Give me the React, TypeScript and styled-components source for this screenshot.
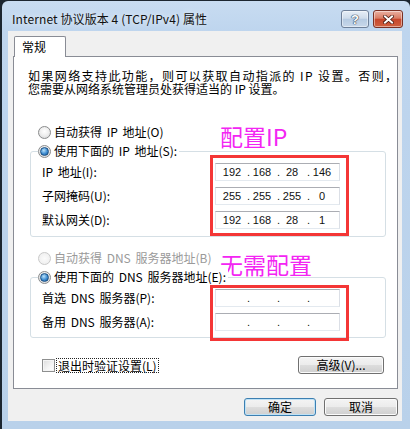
import React from "react";
import styled, { createGlobalStyle } from "styled-components";

const GlobalStyle = createGlobalStyle`
  html, body {
    margin: 0;
    padding: 0;
    background: #1c2630;
  }
  body {
    font-family: "Noto Sans CJK SC", "Liberation Sans", sans-serif;
    font-size: 12px;
    color: #000;
  }
  * {
    box-sizing: border-box;
  }
`;

const Window = styled.div`
  width: 408px;
  height: 428px;
  margin: 1px 0 0 2px;
  border-top-left-radius: 6px;
  border-top-right-radius: 6px;
  background: linear-gradient(180deg, #c8dcf1 0%, #bed5ee 30px, #b9d1ea 100%);
  display: flex;
  flex-direction: column;
  padding: 0 8px 8px 6px;
`;

const TitleBar = styled.div`
  height: 30px;
  flex: none;
  display: flex;
  align-items: center;
  padding-top: 6px;
`;

const Caption = styled.div`
  flex: 1;
  margin-left: 4px;
  font-size: 12px;
  line-height: 14px;
  color: #111;
  letter-spacing: 0.1px;
  text-shadow: 0 0 6px rgba(255, 255, 255, 0.9);
`;

const CaptionButton = styled.div<{ $close?: boolean }>`
  width: ${(p) => (p.$close ? 30 : 28)}px;
  height: 18px;
  margin-left: ${(p) => (p.$close ? 4 : 0)}px;
  margin-right: ${(p) => (p.$close ? -1 : 0)}px;
  border-radius: 3px;
  border: 1px solid ${(p) => (p.$close ? "#7a3024" : "#6e8099")};
  box-shadow: inset 0 0 0 1px rgba(255, 255, 255, 0.45);
  background: ${(p) =>
    p.$close
      ? "linear-gradient(180deg, #eab0a2 0%, #d97c64 45%, #c6462c 52%, #d0603f 100%)"
      : "linear-gradient(180deg, #e6eef7 0%, #cfdceb 45%, #b6cbe2 52%, #c8d8ea 100%)"};
  display: flex;
  align-items: center;
  justify-content: center;
`;

const HelpGlyph = styled.span`
  font-family: "Liberation Sans", sans-serif;
  font-weight: bold;
  font-size: 13px;
  line-height: 13px;
  color: #fff;
  text-shadow: 0 0 1px #2c3c52, 0 0 1px #2c3c52, 0 0 1px #2c3c52;
`;

const Client = styled.div`
  flex: 1;
  background: #f0f0f0;
  display: flex;
  flex-direction: column;
  padding: 5px 4px 5px 5px;
`;

const TabStrip = styled.div`
  height: 20px;
  flex: none;
  display: flex;
  padding-left: 1px;
`;

const Tab = styled.div`
  width: 52px;
  height: 21px;
  margin-bottom: -1px;
  position: relative;
  z-index: 1;
  background: #fff;
  border: 1px solid #898c95;
  border-bottom: none;
  border-radius: 2px 2px 0 0;
  padding-left: 7px;
  line-height: 19px;
`;

const TabPanel = styled.div`
  height: 333px;
  flex: none;
  background: #fff;
  border: 1px solid #898c95;
  display: flex;
  flex-direction: column;
  padding: 12px 11px 0 16px;
`;

const Intro = styled.div`
  margin-left: -2px;
`;

const IntroLine = styled.div<{ $spread?: number }>`
  height: 13px;
  line-height: 13px;
  white-space: nowrap;
  letter-spacing: ${(p) => p.$spread ?? 0}px;
`;

const RadioRow = styled.div<{ $gap: number }>`
  height: 16px;
  margin-top: ${(p) => p.$gap}px;
  display: flex;
  align-items: center;
`;

const OptionSlot = styled.div`
  width: 190px;
  padding-left: 8px;
  display: flex;
  align-items: center;
`;

const Option = styled.label<{ $disabled?: boolean }>`
  display: flex;
  align-items: center;
  white-space: nowrap;
  color: ${(p) => (p.$disabled ? "#9a9a9a" : "#000")};
  line-height: 16px;
  word-spacing: 2px;
`;

const RadioMark = styled.span<{ $checked?: boolean; $disabled?: boolean }>`
  width: 13px;
  height: 13px;
  flex: none;
  border-radius: 50%;
  margin-right: 3px;
  border: 1px solid ${(p) => (p.$disabled ? "#c9c9c9" : "#8a8b8c")};
  background: ${(p) =>
    p.$disabled
      ? "radial-gradient(circle, #fbfbfb 0%, #ececec 100%)"
      : "radial-gradient(circle at 50% 40%, #ffffff 0%, #eeeeee 50%, #cfd1d3 100%)"};
  display: flex;
  align-items: center;
  justify-content: center;

  &::after {
    content: "";
    display: ${(p) => (p.$checked ? "block" : "none")};
    width: 7px;
    height: 7px;
    border-radius: 50%;
    border: 1px solid #1b4f82;
    background: radial-gradient(circle at 40% 35%, #b9e2fb 0%, #3d8bd0 55%, #1c5a95 100%);
  }
`;

const Annotation = styled.div<{ $drop: number }>`
  align-self: flex-start;
  margin-top: ${(p) => p.$drop}px;
  font-size: 23px;
  line-height: 24px;
  color: #f325f3;
  white-space: nowrap;
`;

const Group = styled.div`
  margin-top: 11px;
  border: 1px solid #d5dfe5;
  border-radius: 3px;
  display: flex;
  flex-direction: column;
`;

const GroupHeader = styled.div`
  align-self: flex-start;
  height: 16px;
  margin: -9px 0 0 7px;
  padding-right: 2px;
  background: #fff;
  display: flex;
  align-items: center;
`;

const GroupBody = styled.div<{ $top: number; $bottom: number }>`
  display: flex;
  margin-top: ${(p) => p.$top}px;
  margin-bottom: ${(p) => p.$bottom}px;
  padding-left: 11px;
`;

const LabelColumn = styled.div<{ $pad: number }>`
  width: 168px;
  padding-top: ${(p) => p.$pad}px;
  display: flex;
  flex-direction: column;
  gap: 6px;
`;

const FieldLabel = styled.div`
  height: 18px;
  line-height: 18px;
  white-space: nowrap;
  word-spacing: 2px;
`;

const Highlight = styled.div<{ $pad: string }>`
  border: 3px solid #f43636;
  padding: ${(p) => p.$pad};
  display: flex;
  flex-direction: column;
  gap: 6px;
`;

const AddressBox = styled.div`
  width: 125px;
  height: 18px;
  background: #fff;
  border: 1px solid;
  border-color: #abadb3 #dbdfe6 #e3e9ef #e2e3ea;
  display: flex;
  align-items: center;
  padding-left: 4px;
  font-family: "Liberation Sans", sans-serif;
  font-size: 11px;
  line-height: 14px;
  color: #111;
`;

const Octet = styled.span`
  width: 24px;
  text-align: center;
`;

const Dot = styled.span`
  width: 6px;
  text-align: right;
`;

const FooterRow = styled.div`
  height: 18px;
  margin-top: 18px;
  display: flex;
  align-items: center;
  justify-content: space-between;
  padding: 0 2px 0 12px;
`;

const CheckOption = styled.label`
  display: flex;
  align-items: center;
`;

const CheckMark = styled.span`
  width: 13px;
  height: 13px;
  border: 1px solid #8e8f8f;
  background: linear-gradient(135deg, #dcdcdc 0%, #f5f5f5 60%, #ffffff 100%);
  box-shadow: inset 0 0 0 1px #f4f4f4;
`;

const FocusText = styled.span`
  margin-left: 2px;
  padding: 0 1px;
  line-height: 13px;
  outline: 1px dotted #222;
  white-space: nowrap;
`;

const PushButton = styled.button<{ $width: number; $default?: boolean }>`
  width: ${(p) => p.$width}px;
  height: 18px;
  padding: 0;
  font-family: "Noto Sans CJK SC", "Liberation Sans", sans-serif;
  font-size: 12px;
  line-height: 14px;
  color: #000;
  border-radius: 3px;
  border: 1px solid ${(p) => (p.$default ? "#3c7fb1" : "#707070")};
  box-shadow: inset 0 0 0 1px ${(p) => (p.$default ? "#bfe2f6" : "#fbfbfb")};
  background: linear-gradient(180deg, #f4f4f4 0%, #ececec 48%, #dddddd 52%, #cfcfcf 100%);
`;

const DialogButtons = styled.div`
  margin-top: 9px;
  display: flex;
  justify-content: flex-end;
  gap: 8px;
`;

function CloseGlyph() {
  const d = "M2 1.5 L9 7.5 M9 1.5 L2 7.5";
  return (
    <svg width="11" height="9" viewBox="0 0 11 9">
      <path d={d} stroke="#4a1a12" strokeWidth="3.6" strokeLinecap="square" />
      <path d={d} stroke="#fff" strokeWidth="2" strokeLinecap="square" />
    </svg>
  );
}

function Address({ value }: { value: string[] }) {
  return (
    <AddressBox>
      {value.map((part, i) => (
        <React.Fragment key={i}>
          {i > 0 && <Dot>.</Dot>}
          <Octet>{part}</Octet>
        </React.Fragment>
      ))}
    </AddressBox>
  );
}

function Radio({
  label,
  checked,
  disabled,
}: {
  label: string;
  checked?: boolean;
  disabled?: boolean;
}) {
  return (
    <Option $disabled={disabled}>
      <RadioMark $checked={checked} $disabled={disabled} />
      {label}
    </Option>
  );
}

const ipFields = [
  { label: "IP 地址(I):", value: ["192", "168", "28", "146"] },
  { label: "子网掩码(U):", value: ["255", "255", "255", "0"] },
  { label: "默认网关(D):", value: ["192", "168", "28", "1"] },
];

const dnsFields = [
  { label: "首选 DNS 服务器(P):", value: ["", "", "", ""] },
  { label: "备用 DNS 服务器(A):", value: ["", "", "", ""] },
];

export default function App() {
  return (
    <>
      <GlobalStyle />
      <Window>
        <TitleBar>
          <Caption>Internet 协议版本 4 (TCP/IPv4) 属性</Caption>
          <CaptionButton>
            <HelpGlyph>?</HelpGlyph>
          </CaptionButton>
          <CaptionButton $close>
            <CloseGlyph />
          </CaptionButton>
        </TitleBar>
        <Client>
          <TabStrip>
            <Tab>常规</Tab>
          </TabStrip>
          <TabPanel>
            <Intro>
              <IntroLine $spread={1.4}>
                如果网络支持此功能，则可以获取自动指派的 IP 设置。否则，
              </IntroLine>
              <IntroLine>您需要从网络系统管理员处获得适当的 IP 设置。</IntroLine>
            </Intro>

            <RadioRow $gap={29}>
              <OptionSlot>
                <Radio label="自动获得 IP 地址(O)" />
              </OptionSlot>
              <Annotation $drop={0}>配置IP</Annotation>
            </RadioRow>
            <Group>
              <GroupHeader>
                <Radio label="使用下面的 IP 地址(S):" checked />
              </GroupHeader>
              <GroupBody $top={-4} $bottom={0}>
                <LabelColumn $pad={8}>
                  {ipFields.map((f) => (
                    <FieldLabel key={f.label}>{f.label}</FieldLabel>
                  ))}
                </LabelColumn>
                <Highlight $pad="5px 6px 4px 2px">
                  {ipFields.map((f) => (
                    <Address key={f.label} value={f.value} />
                  ))}
                </Highlight>
              </GroupBody>
            </Group>

            <RadioRow $gap={13}>
              <OptionSlot>
                <Radio label="自动获得 DNS 服务器地址(B)" disabled />
              </OptionSlot>
              <Annotation $drop={2}>无需配置</Annotation>
            </RadioRow>
            <Group>
              <GroupHeader>
                <Radio label="使用下面的 DNS 服务器地址(E):" checked />
              </GroupHeader>
              <GroupBody $top={0} $bottom={-4}>
                <LabelColumn $pad={4}>
                  {dnsFields.map((f) => (
                    <FieldLabel key={f.label}>{f.label}</FieldLabel>
                  ))}
                </LabelColumn>
                <Highlight $pad="1px 6px 7px 2px">
                  {dnsFields.map((f) => (
                    <Address key={f.label} value={f.value} />
                  ))}
                </Highlight>
              </GroupBody>
            </Group>

            <FooterRow>
              <CheckOption>
                <CheckMark />
                <FocusText>退出时验证设置(L)</FocusText>
              </CheckOption>
              <PushButton $width={86}>高级(V)...</PushButton>
            </FooterRow>
          </TabPanel>
          <DialogButtons>
            <PushButton $width={72} $default>
              确定
            </PushButton>
            <PushButton $width={74}>取消</PushButton>
          </DialogButtons>
        </Client>
      </Window>
    </>
  );
}
